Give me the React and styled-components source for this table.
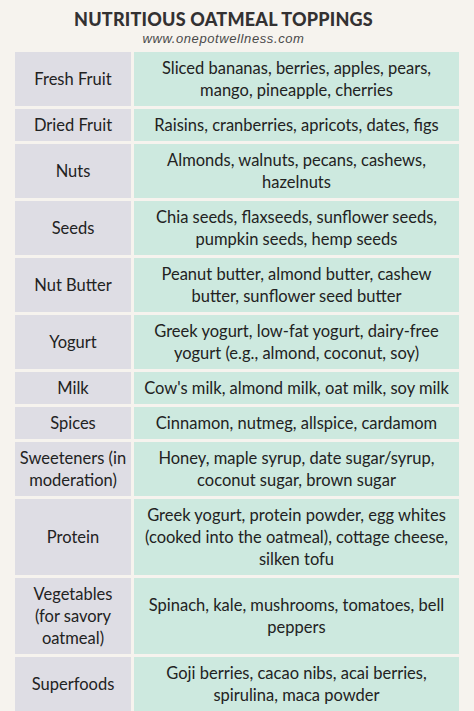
import React from "react";
import styled, { createGlobalStyle } from "styled-components";

const Global = createGlobalStyle`
  html, body { margin: 0; padding: 0; background: #f6f3ee; }
  body { font-family: Lato, "Noto Sans", sans-serif; color: #222; }
`;

const Page = styled.div`
  width: 474px;
  height: 711px;
  overflow: hidden;
  background: #f6f3ee;
  display: flex;
  flex-direction: column;
  align-items: center;
`;

const Header = styled.header`
  height: 53px;
  display: flex;
  flex-direction: column;
  align-items: center;
  gap: 2px;
  padding-top: 9px;
  margin-right: 27px;
  box-sizing: border-box;
`;

const Title = styled.h1`
  margin: 0;
  font-family: Lato, sans-serif;
  font-weight: 900;
  font-size: 18px;
  line-height: 20px;
  color: #333132;
  letter-spacing: 0.22px;
`;

const Subtitle = styled.div`
  font-family: "Liberation Sans", Arial, sans-serif;
  font-style: italic;
  font-size: 13px;
  line-height: 15px;
  color: #4a4a4a;
  letter-spacing: 0.6px;
`;

const Table = styled.div`
  display: grid;
  grid-template-columns: 116px 325px;
  column-gap: 3px;
  row-gap: 3px;
`;

const Cell = styled.div`
  background: ${(p) => (p.$label ? "#dedde4" : "#cde9df")};
  display: flex;
  flex-direction: column;
  align-items: center;
  justify-content: center;
  text-align: center;
  padding: 5px 2px;
  font-size: 16.5px;
  line-height: 22px;
  color: #222;
`;

const Line = styled.span`
  display: block;
  white-space: nowrap;
`;

const rows = [
  [["Fresh Fruit"], ["Sliced bananas, berries, apples, pears,", "mango, pineapple, cherries"]],
  [["Dried Fruit"], ["Raisins, cranberries, apricots, dates, figs"]],
  [["Nuts"], ["Almonds, walnuts, pecans, cashews,", "hazelnuts"]],
  [["Seeds"], ["Chia seeds, flaxseeds, sunflower seeds,", "pumpkin seeds, hemp seeds"]],
  [["Nut Butter"], ["Peanut butter, almond butter, cashew", "butter, sunflower seed butter"]],
  [["Yogurt"], ["Greek yogurt, low-fat yogurt, dairy-free", "yogurt (e.g., almond, coconut, soy)"]],
  [["Milk"], ["Cow's milk, almond milk, oat milk, soy milk"]],
  [["Spices"], ["Cinnamon, nutmeg, allspice, cardamom"]],
  [["Sweeteners (in", "moderation)"], ["Honey, maple syrup, date sugar/syrup,", "coconut sugar, brown sugar"]],
  [["Protein"], ["Greek yogurt, protein powder, egg whites", "(cooked into the oatmeal), cottage cheese,", "silken tofu"]],
  [["Vegetables", "(for savory", "oatmeal)"], ["Spinach, kale, mushrooms, tomatoes, bell", "peppers"]],
  [["Superfoods"], ["Goji berries, cacao nibs, acai berries,", "spirulina, maca powder"]],
];

export default function App() {
  return (
    <Page>
      <Global />
      <Header>
        <Title>NUTRITIOUS OATMEAL TOPPINGS</Title>
        <Subtitle>www.onepotwellness.com</Subtitle>
      </Header>
      <Table>
        {rows.map(([label, value], i) => (
          <React.Fragment key={i}>
            <Cell $label>
              {label.map((l, j) => (
                <Line key={j}>{l}</Line>
              ))}
            </Cell>
            <Cell>
              {value.map((l, j) => (
                <Line key={j}>{l}</Line>
              ))}
            </Cell>
          </React.Fragment>
        ))}
      </Table>
    </Page>
  );
}
